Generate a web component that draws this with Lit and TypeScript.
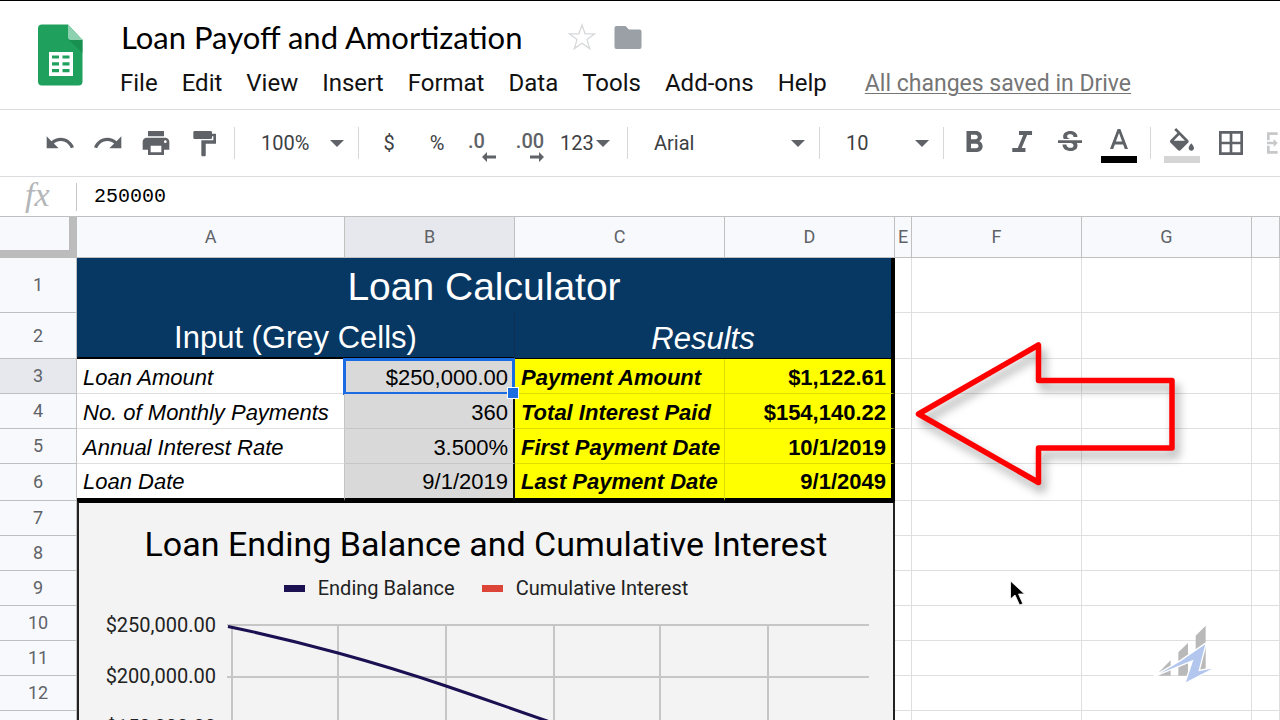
import { LitElement, html, css, svg, nothing } from "lit";
import { customElement } from "lit/decorators.js";
import { classMap } from "lit/directives/class-map.js";

const MENUS = ["File", "Edit", "View", "Insert", "Format", "Data", "Tools", "Add-ons", "Help"];

const PATHS = {
  undo: "M12.5 8c-2.65 0-5.05.99-6.9 2.6L2 7v9h9l-3.62-3.62c1.39-1.16 3.16-1.88 5.12-1.88 3.54 0 6.55 2.31 7.6 5.5l2.37-.78C21.08 11.03 17.15 8 12.5 8z",
  redo: "M18.4 10.6C16.55 8.99 14.15 8 11.5 8c-4.65 0-8.58 3.03-9.96 7.22L3.9 16c1.05-3.19 4.05-5.5 7.6-5.5 1.95 0 3.73.72 5.12 1.88L13 16h9V7l-3.6 3.6z",
  print: "M19 8H5c-1.66 0-3 1.34-3 3v6h4v4h12v-4h4v-6c0-1.66-1.34-3-3-3zm-3 11H8v-5h8v5zm3-7c-.55 0-1-.45-1-1s.45-1 1-1 1 .45 1 1-.45 1-1 1zm-1-9H6v4h12V3z",
  paint: "M18 5V4c0-.55-.45-1-1-1H5c-.55 0-1 .45-1 1v4c0 .55.45 1 1 1h12c.55 0 1-.45 1-1V7h1v3H10v11c0 .55.3 1 .8 1h1.700c.5 0 .8-.45.8-1v-8.500h7.700V5h-3z",
  bold: "M15.6 10.79c.97-.67 1.65-1.77 1.65-2.79 0-2.26-1.75-4-4-4H7v14h7.04c2.09 0 3.71-1.7 3.71-3.79 0-1.52-.86-2.82-2.15-3.42zM10 6.500h3c.83 0 1.500.67 1.500 1.500s-.67 1.500-1.500 1.500h-3v-3zm3.500 9H10v-3h3.500c.83 0 1.500.67 1.500 1.500s-.67 1.500-1.500 1.500z",
  italic: "M10 4v2.600h2.800l-3.600 8.800H5.500V18h8.800v-2.600h-2.500l3.600-8.800H18.700V4z",
  strike: "M7.24 8.75c-.26-.48-.39-1.03-.39-1.67 0-.61.13-1.16.4-1.67.26-.5.63-.93 1.11-1.29.48-.35 1.05-.63 1.7-.83.66-.19 1.39-.29 2.18-.29.81 0 1.54.11 2.21.34.66.22 1.23.54 1.69.94.47.4.83.88 1.08 1.43s.38 1.15.38 1.81h-3.01c0-.31-.05-.59-.15-.85-.09-.27-.24-.49-.44-.68-.2-.19-.45-.33-.75-.44-.3-.1-.66-.16-1.06-.16-.39 0-.74.04-1.03.13s-.53.21-.72.36c-.19.16-.34.34-.44.55-.1.21-.15.43-.15.66 0 .48.25.88.74 1.21.38.25.77.48 1.41.7H7.39c-.05-.08-.11-.17-.15-.25zM21 12v-2H3v2h9.62c.18.07.4.14.55.2.37.17.66.34.87.51s.35.36.43.57c.07.2.11.43.11.69 0 .23-.05.45-.14.66-.09.2-.23.38-.42.53-.19.15-.42.26-.71.35-.29.08-.63.13-1.01.13-.43 0-.83-.04-1.18-.13s-.66-.23-.91-.42c-.25-.19-.45-.44-.59-.75s-.25-.76-.25-1.21H6.4c0 .55.08 1.13.24 1.58s.37.85.65 1.21c.28.35.6.66.98.92.37.26.78.48 1.22.65.44.17.9.3 1.38.39.48.08.96.13 1.44.13.8 0 1.53-.09 2.18-.28s1.21-.45 1.67-.79c.46-.34.82-.77 1.07-1.27s.38-1.07.38-1.71c0-.6-.1-1.14-.31-1.61-.05-.11-.11-.23-.17-.33H21z",
  borders: "M3 3v18h18V3H3zm8 16H5v-6h6v6zm0-8H5V5h6v6zm8 8h-6v-6h6v6zm0-8h-6V5h6v6z",
  merge: "M5 10H3V4h8v2H5v4zm14 8h-6v2h8v-6h-2v4zM5 18v-4H3v6h8v-2H5zM21 4h-8v2h6v4h2V4zM8 13v2l3-3-3-3v2H3v2h5zm8-2V9l-3 3 3 3v-2h5v-2h-5z",
};

const glyph = (d: string) => html`<svg class="glyph" viewBox="0 0 24 24" aria-hidden="true"><path d=${d} /></svg>`;
const caret = html`<svg class="caret" viewBox="0 0 14 7" aria-hidden="true"><path d="M0 0h14L7 7z" /></svg>`;

@customElement("sheet-header")
class SheetHeader extends LitElement {
  static styles = css`
    :host { display: flex; align-items: flex-start; gap: 37px; padding: 14px 36px 9px 38px; border-bottom: 1px solid #dadce0; font-family: Roboto, sans-serif; color: #111; }
    .logo { width: 45px; height: 62px; margin-top: 9px; flex: none; }
    .main { display: flex; flex-direction: column; gap: 8px; min-width: 0; }
    .title-row { display: flex; align-items: center; gap: 14px; padding-left: 1px; }
    h1 { margin: 0 30px 0 0; font: 400 31px/44px Lato, sans-serif; color: #000; white-space: nowrap; }
    button { margin: 0; padding: 0; border: 0; background: none; font: inherit; color: inherit; cursor: pointer; }
    .mark { display: flex; }
    .mark svg { width: 32px; height: 32px; }
    .menu-row { display: flex; align-items: baseline; gap: 38px; font-size: 24px; line-height: 32px; white-space: nowrap; }
    nav { display: flex; gap: 24px; }
    .saved { font-size: 23px; color: #757575; text-underline-offset: 2px; text-decoration-thickness: 1px; }
  `;
  render() {
    return html`
      <svg class="logo" viewBox="0 0 45 62" role="img" aria-label="Sheets">
        <path d="M4 .5h26L44.500 16v41.500a4 4 0 0 1-4 4H4a4 4 0 0 1-4-4v-53a4 4 0 0 1 4-4z" fill="#1fa15d" />
        <path d="M30 15.500h14.500V29z" fill="#158a4c" opacity=".7" />
        <path d="M30 .5 44.500 16H33a3 3 0 0 1-3-3z" fill="#8ed1b1" />
        <path d="M11 28h24v24H11zM14 31.500v3h7v-3zm10.500 0v3h7v-3zM14 38.300v3.200h7v-3.200zm10.500 0v3.200h7v-3.200zM14 45v3.300h7V45zm10.500 0v3.300h7V45z" fill="#fff" fill-rule="evenodd" />
      </svg>
      <div class="main">
        <div class="title-row">
          <h1>Loan Payoff and Amortization</h1>
          <button class="mark" aria-label="Star">
            <svg viewBox="0 0 32 32"><path d="M16 4l3.100 8.800 9.400.1-7.500 5.700 2.700 9L16 22.300l-7.700 5.300 2.700-9-7.500-5.700 9.400-.1z" fill="none" stroke="#d6d7d9" stroke-width="1.300" /></svg>
          </button>
          <button class="mark" aria-label="Move to folder">
            <svg viewBox="0 0 32 32"><path d="M4.500 5h9l3.500 3.500h10.500a2 2 0 0 1 2 2V26a2 2 0 0 1-2 2h-23a2 2 0 0 1-2-2V7a2 2 0 0 1 2-2z" fill="#9aa0a6" /></svg>
          </button>
        </div>
        <div class="menu-row">
          <nav>${MENUS.map((m) => html`<button>${m}</button>`)}</nav>
          <a class="saved" href="#">All changes saved in Drive</a>
        </div>
      </div>
    `;
  }
}

@customElement("sheet-toolbar")
class SheetToolbar extends LitElement {
  static styles = css`
    :host { display: flex; align-items: center; height: 66px; padding-left: 36px; border-bottom: 1px solid #dadce0; overflow: hidden; font: 400 20px/24px Roboto, sans-serif; color: #3c4043; }
    button { display: flex; align-items: center; justify-content: center; flex: none; width: 48px; height: 48px; margin: 0; padding: 0; border: 0; background: none; font: inherit; color: inherit; cursor: pointer; }
    .glyph { width: 32px; height: 32px; fill: #5f6368; }
    .large .glyph { width: 36px; height: 36px; }
    .faint .glyph { fill: #c6c8ca; }
    .color { width: 50px; }
    .color svg { width: 36px; height: 42px; }
    .format { width: 64px; gap: 2px; padding-left: 3px; justify-content: flex-start; }
    .caret { width: 14px; height: 7px; fill: #5f6368; }
    .rule { flex: none; width: 1px; height: 32px; margin: 0 6px; background: #d5d7da; }
    .pick { display: grid; flex: none; align-items: center; }
    .pick > * { grid-area: 1 / 1; }
    .pick .caret { justify-self: end; margin-right: 8px; pointer-events: none; }
    select { appearance: none; width: 100%; height: 40px; margin: 0; padding: 0 24px 0 20px; border: 0; background: none; font: inherit; color: inherit; }
    .short { width: 111px; }
    .long { width: 179px; }
    .decimal { display: grid; grid-template: 22px 10px / 1fr; align-content: center; padding: 6px 13px 0 7px; font-weight: 500; color: #5f6368; text-align: left; }
    .decimal svg { width: 14px; height: 10px; fill: #5f6368; justify-self: end; }
  `;
  private tool(name: string, d: string, kind = "") {
    return html`<button class=${kind} aria-label=${name}>${glyph(d)}</button>`;
  }
  private pick(label: string, value: string, size: string) {
    return html`<span class="pick ${size}"><select aria-label=${label}><option>${value}</option></select>${caret}</span>`;
  }
  render() {
    const rule = html`<span class="rule"></span>`;
    return html`
      ${this.tool("Undo", PATHS.undo)}${this.tool("Redo", PATHS.redo)}${this.tool("Print", PATHS.print)}${this.tool("Paint format", PATHS.paint)}
      ${rule}${this.pick("Zoom", "100%", "short")}${rule}
      <button>$</button><button>%</button>
      <button class="decimal" aria-label="Decrease decimal places">.0<svg viewBox="0 0 14 10"><path d="M5 0v3.500h9v3H5V10L0 5z" /></svg></button>
      <button class="decimal" aria-label="Increase decimal places">.00<svg viewBox="0 0 14 10"><path d="M9 0v3.500H0v3h9V10l5-5z" /></svg></button>
      <button class="format">123${caret}</button>
      ${rule}${this.pick("Font", "Arial", "long")}${rule}${this.pick("Font size", "10", "short")}${rule}
      ${this.tool("Bold", PATHS.bold, "large")}${this.tool("Italic", PATHS.italic, "large")}${this.tool("Strikethrough", PATHS.strike)}
      <button class="color" aria-label="Text color">
        <svg viewBox="0 0 36 42"><path d="M16.600 7 9 27h3.200l1.700-4.600h8.200l1.700 4.600H27L19.400 7zm-1.700 12.500L18 11l3.100 8.500z" fill="#5f6368" /><path d="M0 34h36v7H0z" /></svg>
      </button>
      ${rule}
      <button class="color" aria-label="Fill color">
        <svg viewBox="0 0 36 42"><path transform="translate(2 6) scale(1.333)" d="M16.560 8.940 7.620 0 6.210 1.410l2.380 2.380-5.150 5.150c-.59.59-.59 1.540 0 2.120l5.500 5.500c.29.29.68.44 1.060.44s.77-.15 1.060-.44l5.500-5.500c.59-.58.59-1.530 0-2.120zM5.800 9.500 10 5.210 14.200 9.500zM19 11.500s-2 2.170-2 3.500c0 1.100.9 2 2 2s2-.9 2-2c0-1.330-2-3.500-2-3.500z" fill="#5f6368" /><path d="M0 34h36v7H0z" fill="#d5d5d5" /></svg>
      </button>
      ${this.tool("Borders", PATHS.borders)}${this.tool("Merge cells", PATHS.merge, "faint")}
    `;
  }
}

@customElement("formula-bar")
class FormulaBar extends LitElement {
  static styles = css`
    :host { display: flex; align-items: center; height: 39px; border-bottom: 1px solid #c0c0c0; }
    label { box-sizing: border-box; width: 77px; height: 28px; padding-left: 25px; border-right: 1px solid #c6c6c6; font: italic 400 34px/24px "Liberation Serif", serif; color: #b4b6b9; }
    input { flex: 1; min-width: 0; height: 32px; padding: 0 0 0 17px; border: 0; outline: 0; background: none; font: 400 20px/24px "Liberation Mono", monospace; color: #000; }
  `;
  render() {
    return html`<label for="formula">fx</label><input id="formula" value="250000" />`;
  }
}

@customElement("loan-chart")
class LoanChart extends LitElement {
  static styles = css`
    :host { display: flex; flex-direction: column; align-items: center; box-sizing: border-box; padding-top: 19px; border: 2px solid #222; border-top-color: #000; background: #f3f3f3; font-family: Roboto, sans-serif; }
    h2 { margin: 0; font-weight: 400; font-size: 34px; line-height: 44px; color: #000; white-space: nowrap; }
    .legend { display: flex; gap: 27px; margin: 10px 0 0; padding: 0; list-style: none; font-size: 20px; line-height: 24px; color: #222; }
    .legend li { display: flex; align-items: center; gap: 13px; }
    .key { width: 21px; height: 7px; background: #1b1152; }
    .interest { background: #db4437; }
    .plot { display: block; width: 100%; font-size: 20px; }
    .plot text { fill: #222; text-anchor: end; }
    .grid { stroke: #c6c6c6; stroke-width: 2; fill: none; }
    .balance { stroke: #1b1152; stroke-width: 3; fill: none; }
  `;
  render() {
    const labels = ["$250,000.00", "$200,000.00", "$150,000.00", "$100,000.00"];
    return html`
      <h2>Loan Ending Balance and Cumulative Interest</h2>
      <ul class="legend">
        <li><span class="key"></span>Ending Balance</li>
        <li><span class="key interest"></span>Cumulative Interest</li>
      </ul>
      <svg class="plot" viewBox="0 0 814 200">
        ${labels.map((t, i) => svg`<text x="137" y=${32 + i * 51}>${t}</text><path class="grid" d="M148 ${25 + i * 52}H790" />`)}
        ${[153, 259, 367, 475, 581, 689].map((x) => svg`<path class="grid" d="M${x} 25V200" />`)}
        <path class="balance" d="M149 26.500Q204 38 259 53T367 86T468 121T600 175" />
      </svg>
    `;
  }
}

type Cell = { text?: string; span?: number; kind?: string };
type Row = { height: string; cells: Cell[] };

const COLUMNS = ["A", "B", "C", "D", "E", "F", "G", ""];
const blank = (n: number): Cell[] => Array.from({ length: n }, () => ({}));
const entry = (a: string, b: string, c: string, d: string, extra = "", picked = ""): Cell[] => [
  { text: a, kind: `label ${extra}` },
  { text: b, kind: `input ${extra} ${picked}` },
  { text: c, kind: `result ${extra}` },
  { text: d, kind: `result amount ${extra}` },
  ...blank(4),
];
const ROWS: Row[] = [
  { height: "tall", cells: [{ text: "Loan Calculator", span: 4, kind: "banner edge" }, ...blank(4)] },
  { height: "medium", cells: [{ text: "Input (Grey Cells)", span: 2, kind: "banner sub thick" }, { text: "Results", span: 2, kind: "banner sub edge slant" }, ...blank(4)] },
  { height: "", cells: entry("Loan Amount", "$250,000.00", "Payment Amount", "$1,122.61", "", "picked") },
  { height: "", cells: entry("No. of Monthly Payments", "360", "Total Interest Paid", "$154,140.22") },
  { height: "", cells: entry("Annual Interest Rate", "3.500%", "First Payment Date", "10/1/2019") },
  { height: "last", cells: entry("Loan Date", "9/1/2019", "Last Payment Date", "9/1/2049", "final") },
  ...Array.from({ length: 7 }, () => ({ height: "", cells: blank(8) })),
];

@customElement("sheet-grid")
class SheetGrid extends LitElement {
  static styles = css`
    :host { display: block; position: relative; flex: 1; min-height: 0; overflow: hidden; }
    table { width: 100%; table-layout: fixed; border-collapse: separate; border-spacing: 0; }
    th, td { box-sizing: border-box; padding: 0; border: 0 solid #dfdfdf; border-width: 0 1px 1px 0; white-space: nowrap; }
    th { height: 35px; border-color: #c0c0c0; background: #f8f9fc; font: 400 18px/24px Roboto, sans-serif; color: #5f6368; }
    thead th { height: 41px; }
    .corner { border-color: #bcbcbc; border-width: 0 8px 8px 0; }
    .active { background: #e6e8ed; }
    .tall th { height: 55px; }
    .medium th { height: 46px; }
    .last th { height: 37px; }
    .rows { width: 77px; }
    .A { width: 268px; }
    .B, .D, .F, .G { width: 170px; }
    .C { width: 210px; }
    .E { width: 17px; }
    td { position: relative; vertical-align: bottom; font: 400 22px/25px "Liberation Sans", Arial, sans-serif; color: #000; }
    .banner { padding-top: 2px; vertical-align: middle; border-width: 0; background: #073763; font-size: 39px; line-height: 46px; color: #fff; text-align: center; }
    .sub { padding-top: 6px; border-bottom: 1px solid #000; font-size: 31px; line-height: 36px; }
    .thick { border-bottom-width: 2px; border-right: 1px solid #0d2f52; }
    .edge { border-right: 4px solid #000; }
    .slant { font-style: italic; }
    .label, .input, .result { padding: 0 5px 3px 6px; }
    .label { font-style: italic; border-right-color: #c4c4c4; }
    .input { background: #d9d9d9; border-color: #c6c6c6; border-right: 2px solid #111; text-align: right; }
    .result { background: #ff0; border-color: #dede00; font-weight: 700; font-style: italic; }
    .amount { border-right: 4px solid #000; font-style: normal; text-align: right; }
    .final { padding-bottom: 4px; border-bottom: 3px solid #000; }
    .picked::before { content: ""; position: absolute; inset: -1px -2px -2px -2px; border: 3px solid #1a6ce0; }
    .picked::after { content: ""; position: absolute; right: -6px; bottom: -6px; z-index: 1; width: 10px; height: 10px; border: 1px solid #fff; background: #1a6ce0; }
    .chart { position: absolute; left: 77px; top: 284px; width: 818px; }
    .callout { position: absolute; left: 900px; top: 113px; width: 300px; height: 180px; filter: drop-shadow(4px 7px 5px rgba(0, 0, 0, 0.35)); }
    .pointer { position: absolute; left: 1009px; top: 363px; width: 18px; height: 28px; }
    .brand { position: absolute; left: 1150px; top: 406px; width: 68px; height: 64px; }
  `;
  render() {
    return html`
      <table>
        <colgroup><col class="rows" />${COLUMNS.map((c) => html`<col class=${c || nothing} />`)}</colgroup>
        <thead>
          <tr><th class="corner"></th>${COLUMNS.map((c) => html`<th scope="col" class=${classMap({ active: c === "B" })}>${c}</th>`)}</tr>
        </thead>
        <tbody>
          ${ROWS.map((row, i) => html`<tr class=${row.height}>
            <th scope="row" class=${classMap({ active: i === 2 })}>${i < 12 ? i + 1 : ""}</th>
            ${row.cells.map((c) => html`<td class=${c.kind ?? ""} colspan=${c.span ?? 1}>${c.text ?? ""}</td>`)}
          </tr>`)}
        </tbody>
      </table>
      <loan-chart class="chart"></loan-chart>
      <svg class="callout" viewBox="0 0 300 180" aria-hidden="true">
        <path d="M18.500 84 138.500 15v35.500H272V118H138.500v34.500z" fill="none" stroke="#f00" stroke-width="5.500" stroke-linejoin="round" />
      </svg>
      <svg class="pointer" viewBox="0 0 18 28" aria-hidden="true">
        <path d="M1.500 1v18l4.500-4 4.600 10 3.200-1.300L9.500 14h6z" stroke="#fff" stroke-width=".8" />
      </svg>
      <svg class="brand" viewBox="510 190 204 192" aria-hidden="true">
        <path d="M538 348v-12l34-34v46zM595 348v-70l29-28v98zM647 336V228l30-30v132z" fill="#b9b9b9" />
        <path d="M514 354 602 302 679 249 658 332 710 322 614 372 637 304z" fill="#b3c7ee" stroke="#fff" stroke-width="4" />
      </svg>
    `;
  }
}

@customElement("app-root")
class AppRoot extends LitElement {
  static styles = css`
    :host { display: flex; flex-direction: column; box-sizing: border-box; height: 100vh; overflow: hidden; border-top: 1px solid #000; background: #fff; }
  `;
  render() {
    return html`
      <sheet-header></sheet-header>
      <sheet-toolbar></sheet-toolbar>
      <formula-bar></formula-bar>
      <sheet-grid></sheet-grid>
    `;
  }
}
